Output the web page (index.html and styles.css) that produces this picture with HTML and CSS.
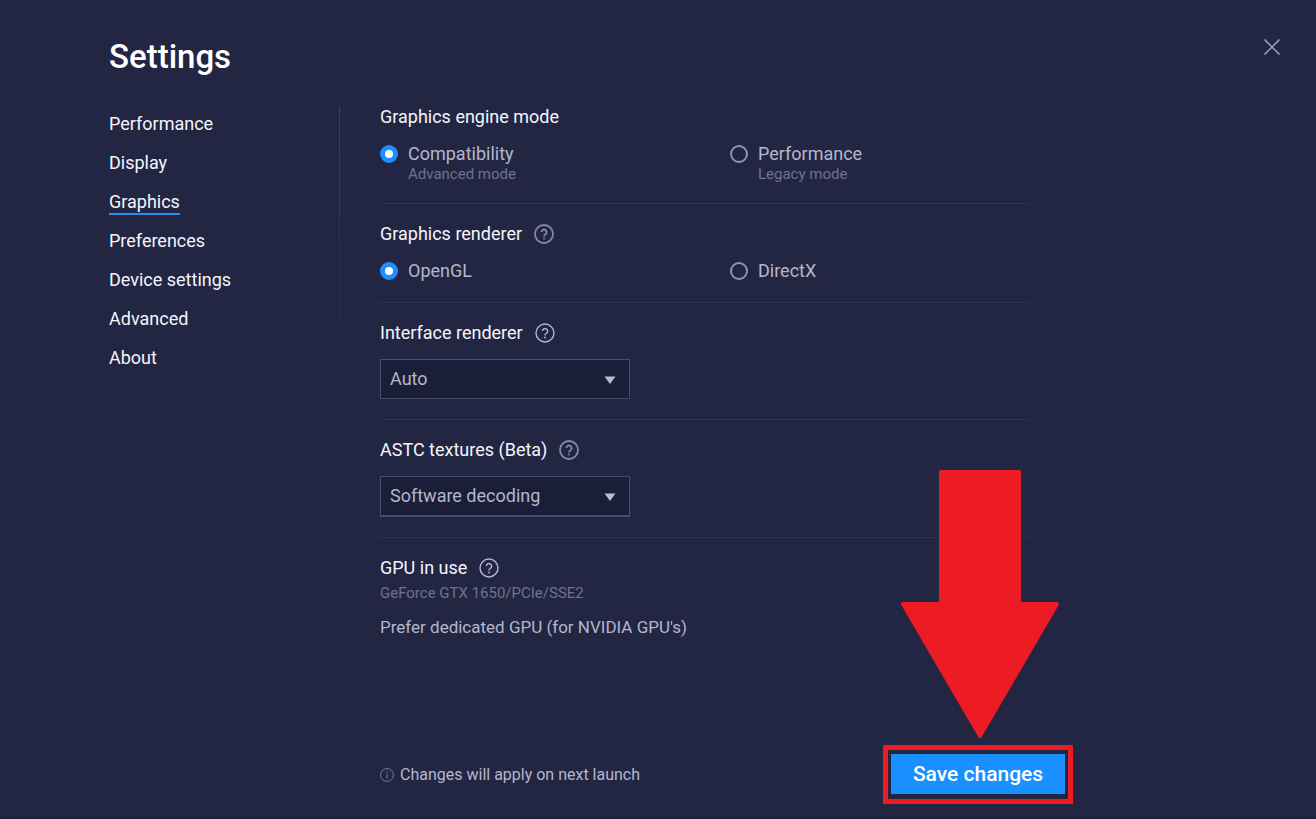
FILE: index.html
```
<!DOCTYPE html>
<html lang="en">
<head>
<meta charset="UTF-8">
<meta name="viewport" content="width=device-width, initial-scale=1.0">
<title>Settings</title>
<link rel="stylesheet" href="styles.css">
</head>
<body>

<svg class="sprite" aria-hidden="true">
    <symbol id="help" viewBox="0 0 20 20">
        <circle cx="10" cy="10" r="9" fill="none" stroke="currentColor"/>
        <path d="M7.400 8.100a2.600 2.600 0 1 1 4.200 2.100c-1 .7-1.600 1.100-1.600 2.200" fill="none" stroke="currentColor"/>
        <circle cx="10" cy="14.500" r=".9" fill="currentColor" stroke="none"/>
    </symbol>
    <symbol id="caret" viewBox="0 0 12 8">
        <path d="M.5.5h11L6 8z" fill="currentColor"/>
    </symbol>
</svg>

<div class="window">
    <header class="header">
        <h1>Settings</h1>
        <button type="button" class="close" aria-label="Close">
            <svg width="18" height="18" viewBox="0 0 18 18"><path d="M1.500 1.500l15 15M16.500 1.500l-15 15" fill="none" stroke="currentColor" stroke-width="1.500"/></svg>
        </button>
    </header>

    <div class="main">
        <nav class="sidebar">
            <a href="#performance">Performance</a>
            <a href="#display">Display</a>
            <a href="#graphics" class="active">Graphics</a>
            <a href="#preferences">Preferences</a>
            <a href="#device">Device settings</a>
            <a href="#advanced">Advanced</a>
            <a href="#about">About</a>
        </nav>

        <form class="content" id="graphics">
            <section class="group">
                <h2>Graphics engine mode</h2>
                <div class="options">
                    <div class="option">
                        <input type="radio" name="engine" id="compatibility" checked>
                        <label for="compatibility">Compatibility<small>Advanced mode</small></label>
                    </div>
                    <div class="option">
                        <input type="radio" name="engine" id="performance">
                        <label for="performance">Performance<small>Legacy mode</small></label>
                    </div>
                </div>
            </section>

            <section class="group">
                <h2>Graphics renderer <svg class="help dim"><use href="#help"/></svg></h2>
                <div class="options">
                    <div class="option">
                        <input type="radio" name="renderer" id="opengl" checked>
                        <label for="opengl">OpenGL</label>
                    </div>
                    <div class="option">
                        <input type="radio" name="renderer" id="directx">
                        <label for="directx">DirectX</label>
                    </div>
                </div>
            </section>

            <section class="group">
                <h2><label for="interface">Interface renderer</label> <svg class="help"><use href="#help"/></svg></h2>
                <div class="select">
                    <select id="interface">
                        <option>Auto</option>
                    </select>
                    <svg class="caret"><use href="#caret"/></svg>
                </div>
            </section>

            <section class="group">
                <h2><label for="astc">ASTC textures (Beta)</label> <svg class="help dim"><use href="#help"/></svg></h2>
                <div class="select">
                    <select id="astc" class="changed">
                        <option>Software decoding</option>
                    </select>
                    <svg class="caret"><use href="#caret"/></svg>
                </div>
            </section>

            <section class="group">
                <h2>GPU in use <svg class="help"><use href="#help"/></svg></h2>
                <p class="gpu">GeForce GTX 1650/PCIe/SSE2</p>
                <p class="prefer">Prefer dedicated GPU (for NVIDIA GPU's)</p>
            </section>

            <footer class="footer">
                <p class="note">
                    <svg width="14" height="14" viewBox="0 0 14 14" fill="none" stroke="currentColor"><circle cx="7" cy="7" r="6.400"/><path d="M7 3.500v1.300M7 6v4.500"/></svg>
                    Changes will apply on next launch
                </p>
                <div class="highlight">
                    <svg class="arrow" viewBox="0 0 158 268"><path d="M40 2h78v132h38L79 266 2 134h38z" fill="#ed1c24" stroke="#ed1c24" stroke-width="4" stroke-linejoin="round"/></svg>
                    <button type="submit" class="save">Save changes</button>
                </div>
            </footer>
        </form>
    </div>
</div>

</body>
</html>
```

FILE: styles.css
```
* {
    box-sizing: border-box;
}
body {
    margin: 0;
    background-color: #232642;
    color: #f4f5fb;
    font-family: Roboto, "Open Sans", sans-serif;
    font-size: 18px;
    line-height: 22px;
}
h1, h2, p {
    margin: 0;
}
.sprite {
    display: none;
}
.window {
    display: flex;
    flex-direction: column;
    min-height: 100vh;
    padding: 36px 35px 13px 109px;
    border-bottom: 2px solid #231f42;
}
.header {
    display: flex;
    justify-content: space-between;
    align-items: flex-start;
    margin-bottom: 29px;
}
h1 {
    color: #fff;
    font-size: 33px;
    font-weight: 500;
    line-height: 42px;
}
.close {
    display: flex;
    padding: 2px 0;
    border: none;
    background: none;
    color: #a3a6bf;
    cursor: pointer;
}
.main {
    display: flex;
    flex: 1;
}
.sidebar {
    display: flex;
    flex-direction: column;
    align-items: flex-start;
    align-self: flex-start;
    gap: 15px;
    flex: 0 0 231px;
    padding-top: 6px;
    border-right: 1px solid;
    border-image: linear-gradient(#3b3f5c, #232642) 1;
}
.sidebar a {
    border-bottom: 2px solid transparent;
    color: #f4f5fb;
    text-decoration: none;
}
.sidebar .active {
    border-color: #2c8df0;
}
.content {
    display: flex;
    flex-direction: column;
    flex: 1;
    max-width: 733px;
    padding-left: 40px;
}
.group {
    max-width: 650px;
    padding-bottom: 20px;
    margin-bottom: 20px;
    border-bottom: 1px solid #2f3350;
}
.group:nth-of-type(5) {
    border-bottom: none;
}
h2 {
    display: flex;
    align-items: center;
    gap: 12px;
    height: 20px;
    margin-bottom: 16px;
    font-size: 18px;
    font-weight: 400;
}
.help {
    width: 20px;
    height: 20px;
    color: #b4b7d0;
    stroke-width: 1.4;
}
.dim {
    color: #878aa6;
    stroke-width: 1.8;
}
.options {
    display: grid;
    grid-template-columns: 350px 1fr;
}
.option {
    display: flex;
    gap: 10px;
    color: #b3b6cd;
}
.option input {
    appearance: none;
    width: 18px;
    height: 18px;
    margin: 2px 0;
    border: 2px solid #9093ae;
    border-radius: 50%;
}
.option input:checked {
    border: 5px solid #1e8fff;
    background-color: #fff;
}
.option small {
    display: block;
    color: #6f728e;
    font-size: 15px;
    line-height: 18px;
}
.select {
    position: relative;
    width: 250px;
}
.select select {
    appearance: none;
    display: block;
    width: 100%;
    height: 40px;
    padding: 0 30px 0 9px;
    border: 1px solid #4a4d6a;
    border-radius: 0;
    background-color: #1b1e38;
    color: #b3b6cd;
    font: inherit;
}
.select .changed {
    height: 41px;
    border-bottom-width: 2px;
}
.caret {
    position: absolute;
    top: 17px;
    right: 14px;
    width: 12px;
    height: 8px;
    color: #b9bcd6;
    pointer-events: none;
}
.gpu {
    margin: -12px 0 12px;
    color: #6f728e;
    font-size: 15px;
}
.prefer {
    color: #b3b6cd;
    font-size: 17px;
}
.footer {
    display: flex;
    justify-content: space-between;
    align-items: center;
    margin-top: auto;
}
.note {
    display: flex;
    align-items: center;
    gap: 6px;
    color: #b3b6cd;
    font-size: 16px;
}
.note svg {
    color: #7c7f9b;
}
.highlight {
    position: relative;
    padding: 4px 3px 5px;
    border: 5px solid #ed1c24;
}
.arrow {
    position: absolute;
    bottom: 61px;
    left: 13px;
    width: 158px;
    height: 268px;
    pointer-events: none;
}
.save {
    display: block;
    width: 174px;
    height: 40px;
    padding: 0;
    border: none;
    background-color: #1a8fff;
    color: #fff;
    font-family: inherit;
    font-size: 21px;
    font-weight: 500;
    cursor: pointer;
}
```
